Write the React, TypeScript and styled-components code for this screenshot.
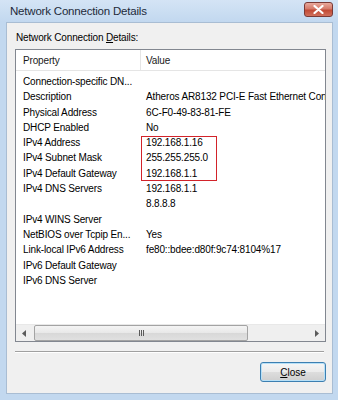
import React from 'react';
import styled, { createGlobalStyle } from 'styled-components';

const ROW_H = 15.3;

const rows: [string, string][] = [
  ['Connection-specific DN...', ''],
  ['Description', 'Atheros AR8132 PCI-E Fast Ethernet Con'],
  ['Physical Address', '6C-F0-49-83-81-FE'],
  ['DHCP Enabled', 'No'],
  ['IPv4 Address', '192.168.1.16'],
  ['IPv4 Subnet Mask', '255.255.255.0'],
  ['IPv4 Default Gateway', '192.168.1.1'],
  ['IPv4 DNS Servers', '192.168.1.1'],
  ['', '8.8.8.8'],
  ['IPv4 WINS Server', ''],
  ['NetBIOS over Tcpip En...', 'Yes'],
  ['Link-local IPv6 Address', 'fe80::bdee:d80f:9c74:8104%17'],
  ['IPv6 Default Gateway', ''],
  ['IPv6 DNS Server', ''],
];

const GlobalStyle = createGlobalStyle`
  body {
    margin: 0;
    background: #c4d9ef;
    font-family: "Liberation Sans", Arial, sans-serif;
  }
`;

const Window = styled.div`
  width: 338px;
  height: 400px;
  display: flex;
  flex-direction: column;
  background: linear-gradient(180deg, #d4e4f5 0px, #c2d8ef 22px, #c2d8ef 100%);
  box-sizing: border-box;
`;

const TitleBar = styled.div`
  height: 22px;
  display: flex;
  align-items: center;
  justify-content: space-between;
  padding: 0 5px 0 10px;
`;

const Title = styled.span`
  font-size: 11.5px;
  color: #1e2a3a;
  letter-spacing: -0.2px;
`;

const CloseBox = styled.div`
  width: 29px;
  height: 15px;
  margin-top: -3px;
  box-sizing: border-box;
  border: 1px solid #7a3a36;
  border-radius: 3px;
  background: linear-gradient(180deg, #e9a99c 0%, #d57a6a 45%, #c24a35 55%, #d0705c 100%);
  display: flex;
  align-items: center;
  justify-content: center;
`;

const Client = styled.div`
  flex: 1;
  margin: 0 5px 6px 6px;
  background: #f0f0f0;
  border: 1px solid #a9bdd3;
  padding: 9px 6px 0 8px;
  display: flex;
  flex-direction: column;
`;

const Caption = styled.div`
  font-size: 10px;
  color: #000;
  height: 17px;
  padding-left: 1px;
  letter-spacing: -0.15px;
`;

const Underline = styled.span`
  text-decoration: underline;
`;

const ListView = styled.div`
  height: 293px;
  box-sizing: border-box;
  border: 1px solid #828790;
  background: #fff;
  display: flex;
  flex-direction: column;
  overflow: hidden;
`;

const Header = styled.div`
  height: 21px;
  display: grid;
  grid-template-columns: 125px 1fr;
  border-bottom: 1px solid #e5e5e5;
  box-sizing: border-box;
`;

const HeaderCell = styled.div<{ $divider?: boolean }>`
  font-size: 10px;
  line-height: 21px;
  padding-left: ${(p) => (p.$divider ? 7 : 5)}px;
  border-right: ${(p) => (p.$divider ? '1px solid #e5e5e5' : 'none')};
  letter-spacing: -0.15px;
  color: #1a1a1a;
`;

const Body = styled.div`
  position: relative;
  flex: 1;
  padding-top: 3px;
`;

const Row = styled.div`
  display: grid;
  grid-template-columns: 125px 1fr;
  height: ${ROW_H}px;
  line-height: ${ROW_H}px;
  font-size: 10px;
  letter-spacing: -0.15px;
  color: #000;
  white-space: nowrap;
`;

const NameCell = styled.div`
  padding-left: 7px;
  overflow: hidden;
`;

const ValueCell = styled.div`
  padding-left: 5px;
  overflow: hidden;
`;

const Highlight = styled.div`
  position: absolute;
  left: 125px;
  width: 76px;
  box-sizing: border-box;
  border: 1px solid #d2232a;
  pointer-events: none;
`;

const ScrollBar = styled.div`
  height: 16px;
  display: flex;
  align-items: stretch;
  background: #efefef;
  border-top: 1px solid #e8e8e8;
`;

const ArrowButton = styled.div`
  width: 16px;
  display: flex;
  align-items: center;
  justify-content: center;
`;

const Track = styled.div`
  flex: 1;
  display: flex;
  padding: 0 2px;
`;

const Thumb = styled.div`
  width: 214px;
  box-sizing: border-box;
  border: 1px solid #a3a3a3;
  border-radius: 2px;
  background: linear-gradient(180deg, #f4f4f4 0%, #e8e8e8 50%, #d8d8d8 51%, #e0e0e0 100%);
  display: flex;
  align-items: center;
  justify-content: center;
`;

const Grip = styled.div`
  display: flex;
  gap: 1px;
  span {
    width: 1px;
    height: 6px;
    background: #5a5a5a;
  }
`;

const Separator = styled.div`
  margin: 9px 2px 0 0;
  height: 0;
  border-top: 1px solid #a0a0a0;
  border-bottom: 1px solid #fff;
`;

const Footer = styled.div`
  display: flex;
  justify-content: flex-end;
  padding-top: 9px;
`;

const Button = styled.button`
  width: 66px;
  height: 20px;
  box-sizing: border-box;
  border: 1px solid #3c7fb1;
  border-radius: 3px;
  background: linear-gradient(180deg, #f6f6f6 0%, #ebebeb 50%, #dddddd 51%, #cfcfcf 100%);
  box-shadow: inset 0 0 0 1px #b7e0f7;
  font-family: "Liberation Sans", Arial, sans-serif;
  font-size: 10px;
  color: #000;
  padding: 0;
`;

const ArrowIcon = ({ dir }: { dir: 'left' | 'right' }) => (
  <svg width="4" height="7" viewBox="0 0 4 7">
    <path d={dir === 'left' ? 'M4 0 L0 3.5 L4 7 Z' : 'M0 0 L4 3.5 L0 7 Z'} fill="#5b5b5b" />
  </svg>
);

const App = () => {
  return (
    <>
      <GlobalStyle />
      <Window>
        <TitleBar>
          <Title>Network Connection Details</Title>
          <CloseBox>
            <svg width="11" height="9" viewBox="0 0 11 9">
              <path
                d="M1.5 1 L9.5 8 M9.5 1 L1.5 8"
                stroke="#fff"
                strokeWidth="2.2"
                strokeLinecap="round"
              />
            </svg>
          </CloseBox>
        </TitleBar>
        <Client>
          <Caption>
            Network Connection <Underline>D</Underline>etails:
          </Caption>
          <ListView>
            <Header>
              <HeaderCell $divider>Property</HeaderCell>
              <HeaderCell>Value</HeaderCell>
            </Header>
            <Body>
              {rows.map(([name, value], i) => (
                <Row key={i}>
                  <NameCell>{name}</NameCell>
                  <ValueCell>{value}</ValueCell>
                </Row>
              ))}
              <Highlight style={{ top: 3 + 4 * ROW_H + 1, height: 3 * ROW_H - 1 }} />
            </Body>
            <ScrollBar>
              <ArrowButton>
                <ArrowIcon dir="left" />
              </ArrowButton>
              <Track>
                <Thumb>
                  <Grip>
                    <span />
                    <span />
                    <span />
                  </Grip>
                </Thumb>
              </Track>
              <ArrowButton>
                <ArrowIcon dir="right" />
              </ArrowButton>
            </ScrollBar>
          </ListView>
          <Separator />
          <Footer>
            <Button>
              <Underline>C</Underline>lose
            </Button>
          </Footer>
        </Client>
      </Window>
    </>
  );
};

export default App;
